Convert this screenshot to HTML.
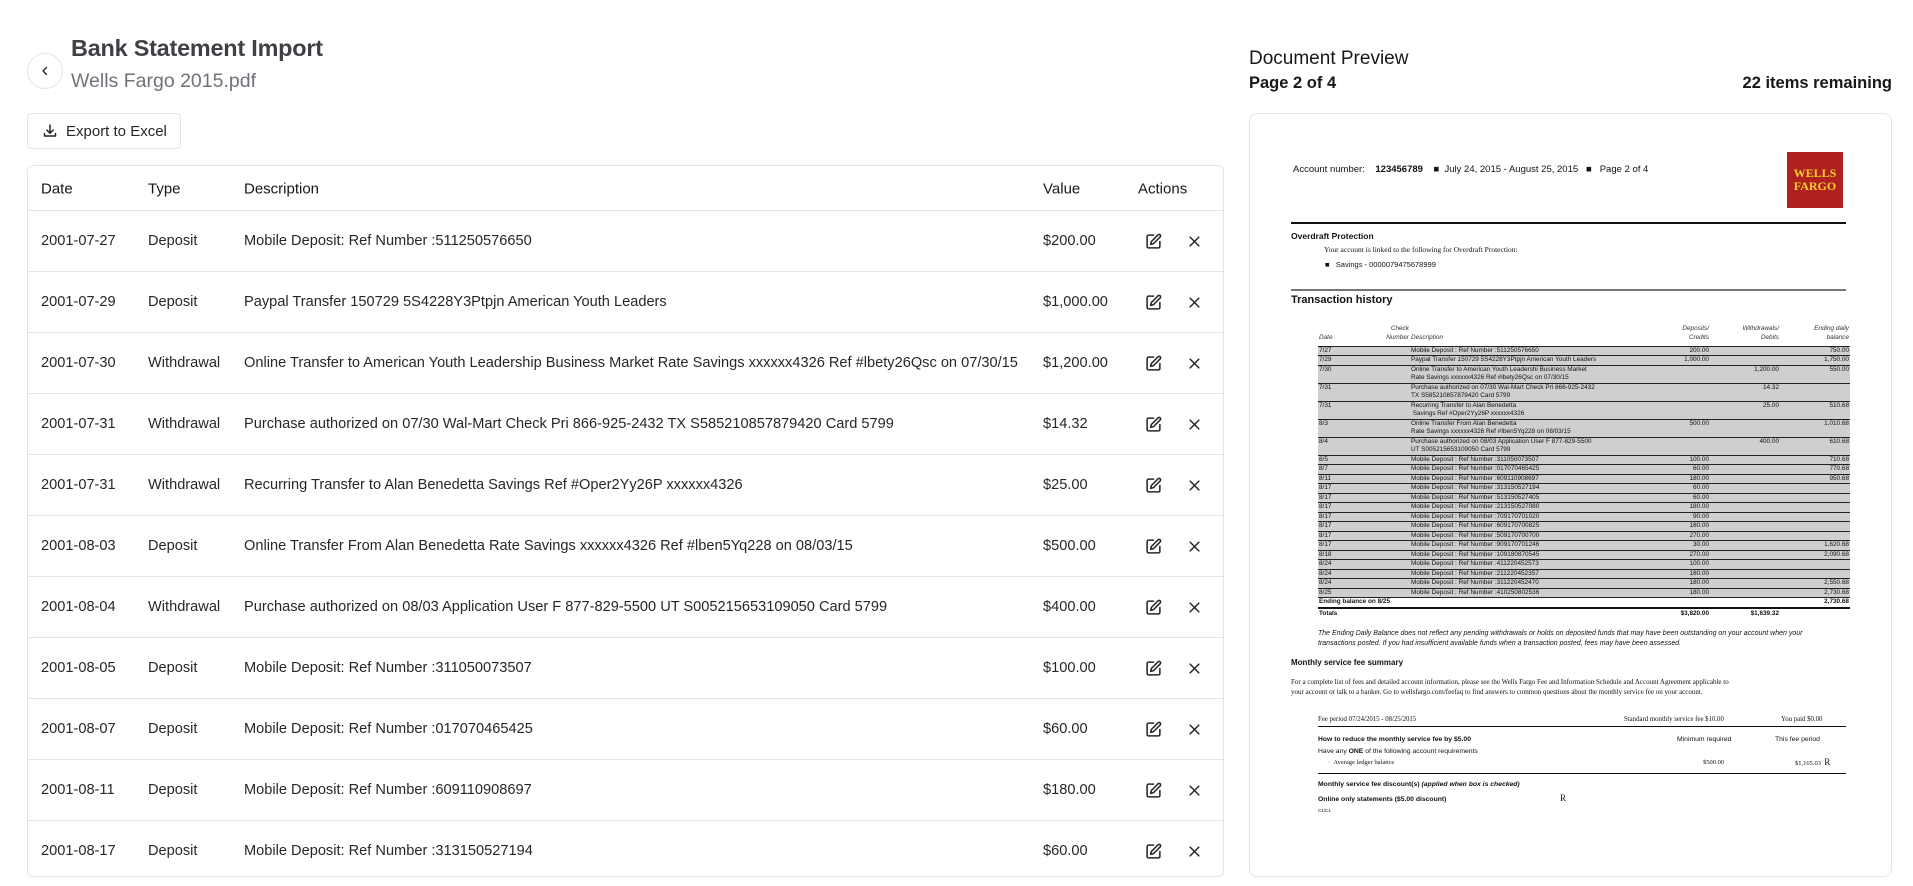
<!DOCTYPE html>
<html><head><meta charset="utf-8"><style>
*{box-sizing:border-box;margin:0;padding:0}
body{width:1913px;height:886px;overflow:hidden;background:#fff;font-family:"Liberation Sans",Arial,sans-serif;color:#18181b;position:relative}
.abs{position:absolute}
.back{left:27px;top:53px;width:36px;height:36px;border:1px solid #e4e4e7;border-radius:50%;display:flex;align-items:center;justify-content:center}
h1{position:absolute;left:71px;top:35px;font-size:23.4px;font-weight:bold;color:#3f3f46;letter-spacing:-0.2px}
.sub{left:71px;top:70px;font-size:19.5px;color:#71717a}
.btn{left:27px;top:113px;width:154px;height:36px;border:1px solid #e4e4e7;border-radius:4px;display:flex;align-items:center;padding-left:14px;font-size:15px;color:#27272a;gap:8px}
.tbl{left:27px;top:165px;width:1197px;height:712px;border:1px solid #e4e4e7;border-radius:6px;overflow:hidden}
.row{position:absolute;left:0;width:1197px;height:61px;border-top:1px solid #e4e4e7;font-size:14.6px;color:#27272a}
.row span{position:absolute;top:50%;transform:translateY(-50%);white-space:nowrap}
.hdr{height:45px;top:0;border-top:none;color:#18181b;font-size:15px}
.ed{position:absolute;left:1117px;top:22px}
.x{position:absolute;left:1159px;top:23px}
.dp{left:1249px;top:48px;font-size:19px;color:#18181b}
.pg{left:1249px;top:74px;font-size:16.5px;font-weight:bold;color:#18181b}
.rem{right:21px;top:74px;font-size:16.5px;font-weight:bold;color:#18181b}
.card{left:1249px;top:113px;width:643px;height:764px;border:1px solid #e4e4e7;border-radius:8px;overflow:hidden}
.pdf{font-family:"Liberation Sans",Arial,sans-serif;color:#111;white-space:nowrap}
.ser{font-family:"Liberation Serif",serif}
table.tx{position:absolute;left:1318px;top:325px;width:532px;border-collapse:collapse;font-size:6.4px;line-height:8.5px}
table.tx td{padding:0 1px;vertical-align:top}
table.tx tr.d td{background:#cfcfcf;border-top:1px solid #222}
.r{text-align:right}
</style></head><body>

<div class="abs back"><svg width="12" height="12" viewBox="0 0 12 12"><path d="M7.5 2.5 4 6l3.5 3.5" fill="none" stroke="#27272a" stroke-width="1.4" stroke-linecap="round" stroke-linejoin="round"/></svg></div>
<h1>Bank Statement Import</h1>
<div class="abs sub">Wells Fargo 2015.pdf</div>
<div class="abs btn"><svg width="16" height="16" viewBox="0 0 16 16" fill="none" stroke="#27272a" stroke-width="1.5" stroke-linecap="round" stroke-linejoin="round"><path d="M8 2v8M4.8 7 8 10.2 11.2 7M2.5 10.5v2.5h11v-2.5"/></svg>Export to Excel</div>

<div class="abs tbl">
<div class="row hdr"><span style="left:13px">Date</span><span style="left:120px">Type</span><span style="left:216px">Description</span><span style="left:1015px">Value</span><span style="left:1110px">Actions</span></div>
</div>

<div class="abs dp">Document Preview</div>
<div class="abs pg">Page 2 of 4</div>
<div class="abs rem">22 items remaining</div>
<div class="abs card"></div>

<div class="abs pdf" style="left:1293px;top:164px;font-size:9.5px">Account number: &nbsp;&nbsp;&nbsp;<b>123456789</b> &nbsp;&nbsp;&nbsp;■ &nbsp;July 24, 2015 - August 25, 2015 &nbsp;&nbsp;■ &nbsp;&nbsp;Page 2 of 4</div>
<div class="abs ser" style="left:1787px;top:152px;width:56px;height:56px;background:#b0201f;color:#f5d130;font-weight:bold;font-size:12px;line-height:13px;text-align:center;padding-top:15px">WELLS<br>FARGO</div>
<div class="abs" style="left:1291px;top:222px;width:555px;height:2px;background:#111"></div>
<div class="abs pdf" style="left:1291px;top:231px;font-size:8.5px;font-weight:bold">Overdraft Protection</div>
<div class="abs pdf ser" style="left:1324px;top:245px;font-size:7.5px">Your account is linked to the following for Overdraft Protection:</div>
<div class="abs pdf" style="left:1325px;top:260px;font-size:7.5px">■ &nbsp;&nbsp;Savings - 0000079475678999</div>
<div class="abs" style="left:1291px;top:289px;width:555px;height:2px;background:#777"></div>
<div class="abs pdf" style="left:1291px;top:294px;font-size:11px;font-weight:bold">Transaction history</div>

<table class="tx pdf">
<tr style="font-style:italic;color:#333"><td style="width:62px;vertical-align:bottom">Date</td><td class="r" style="width:30px;vertical-align:bottom">Check<br>Number</td><td style="vertical-align:bottom">Description</td><td class="r" style="width:80px">Deposits/<br>Credits</td><td class="r" style="width:70px">Withdrawals/<br>Debits</td><td class="r" style="width:70px">Ending daily<br>balance</td></tr>
<tr><td colspan=6 style="height:4px"></td></tr>
<tr class="d"><td>7/27</td><td></td><td>Mobile Deposit : Ref Number :511250576650</td><td class="r">200.00</td><td></td><td class="r">750.00</td></tr>
<tr class="d"><td>7/29</td><td></td><td>Paypal Transfer 150729 5S4228Y3Ptpjn American Youth Leaders</td><td class="r">1,000.00</td><td></td><td class="r">1,750.00</td></tr>
<tr class="d"><td>7/30</td><td></td><td>Online Transfer to American Youth Leadershi Business Market<br>Rate Savings xxxxxx4326 Ref #lbety26Qsc on 07/30/15</td><td></td><td class="r">1,200.00</td><td class="r">550.00</td></tr>
<tr class="d"><td>7/31</td><td></td><td>Purchase authorized on 07/30 Wal-Mart Check Pri 866-925-2432<br>TX S585210857879420 Card 5799</td><td></td><td class="r">14.32</td><td></td></tr>
<tr class="d"><td>7/31</td><td></td><td>Recurring Transfer to Alan Benedetta<br>&nbsp;Savings Ref #Oper2Yy26P xxxxxx4326</td><td></td><td class="r">25.00</td><td class="r">510.68</td></tr>
<tr class="d"><td>8/3</td><td></td><td>Online Transfer From Alan Benedetta<br>Rate Savings xxxxxx4326 Ref #Iben5Yq228 on 08/03/15</td><td class="r">500.00</td><td></td><td class="r">1,010.68</td></tr>
<tr class="d"><td>8/4</td><td></td><td>Purchase authorized on 08/03 Application User F 877-829-5500<br>UT S005215653109050 Card 5799</td><td></td><td class="r">400.00</td><td class="r">610.68</td></tr>
<tr class="d"><td>8/5</td><td></td><td>Mobile Deposit : Ref Number :311050073507</td><td class="r">100.00</td><td></td><td class="r">710.68</td></tr>
<tr class="d"><td>8/7</td><td></td><td>Mobile Deposit : Ref Number :017070465425</td><td class="r">60.00</td><td></td><td class="r">770.68</td></tr>
<tr class="d"><td>8/11</td><td></td><td>Mobile Deposit : Ref Number :609110908697</td><td class="r">180.00</td><td></td><td class="r">950.68</td></tr>
<tr class="d"><td>8/17</td><td></td><td>Mobile Deposit : Ref Number :313150527194</td><td class="r">60.00</td><td></td><td></td></tr>
<tr class="d"><td>8/17</td><td></td><td>Mobile Deposit : Ref Number :513150527405</td><td class="r">60.00</td><td></td><td></td></tr>
<tr class="d"><td>8/17</td><td></td><td>Mobile Deposit : Ref Number :213150527080</td><td class="r">180.00</td><td></td><td></td></tr>
<tr class="d"><td>8/17</td><td></td><td>Mobile Deposit : Ref Number :709170701020</td><td class="r">90.00</td><td></td><td></td></tr>
<tr class="d"><td>8/17</td><td></td><td>Mobile Deposit : Ref Number :609170700825</td><td class="r">180.00</td><td></td><td></td></tr>
<tr class="d"><td>8/17</td><td></td><td>Mobile Deposit : Ref Number :509170700700</td><td class="r">270.00</td><td></td><td></td></tr>
<tr class="d"><td>8/17</td><td></td><td>Mobile Deposit : Ref Number :909170701246</td><td class="r">30.00</td><td></td><td class="r">1,620.68</td></tr>
<tr class="d"><td>8/18</td><td></td><td>Mobile Deposit : Ref Number :109180870545</td><td class="r">270.00</td><td></td><td class="r">2,090.68</td></tr>
<tr class="d"><td>8/24</td><td></td><td>Mobile Deposit : Ref Number :411220452573</td><td class="r">100.00</td><td></td><td></td></tr>
<tr class="d"><td>8/24</td><td></td><td>Mobile Deposit : Ref Number :211220452357</td><td class="r">180.00</td><td></td><td></td></tr>
<tr class="d"><td>8/24</td><td></td><td>Mobile Deposit : Ref Number :311220452470</td><td class="r">180.00</td><td></td><td class="r">2,550.68</td></tr>
<tr class="d"><td>8/25</td><td></td><td>Mobile Deposit : Ref Number :410250802536</td><td class="r">180.00</td><td></td><td class="r">2,730.68</td></tr>
<tr style="font-weight:bold"><td colspan=2 style="border-top:1px solid #222">Ending balance on 8/25</td><td style="border-top:1px solid #222"></td><td style="border-top:1px solid #222"></td><td style="border-top:1px solid #222"></td><td class="r" style="border-top:1px solid #222">2,730.68</td></tr>
<tr style="font-weight:bold"><td colspan=3 style="border-top:2px solid #111;padding-top:1px">Totals</td><td class="r" style="border-top:2px solid #111;padding-top:1px">$3,820.00</td><td class="r" style="border-top:2px solid #111;padding-top:1px">$1,639.32</td><td style="border-top:2px solid #111"></td></tr>
</table>

<div class="abs pdf" style="left:1318px;top:629px;font-size:7px;line-height:10px;font-style:italic">The Ending Daily Balance does not reflect any pending withdrawals or holds on deposited funds that may have been outstanding on your account when your<br>transactions posted. If you had insufficient available funds when a transaction posted, fees may have been assessed.</div>
<div class="abs pdf" style="left:1291px;top:658px;font-size:8px;font-weight:bold">Monthly service fee summary</div>
<div class="abs pdf ser" style="left:1291px;top:677px;font-size:7px;line-height:10px">For a complete list of fees and detailed account information, please see the Wells Fargo Fee and Information Schedule and Account Agreement applicable to<br>your account or talk to a banker. Go to wellsfargo.com/feefaq to find answers to common questions about the monthly service fee on your account.</div>
<div class="abs pdf ser" style="left:1318px;top:716px;font-size:6.8px">Fee period 07/24/2015 - 08/25/2015</div>
<div class="abs pdf ser" style="left:1624px;top:716px;font-size:6.8px">Standard monthly service fee $10.00</div>
<div class="abs pdf ser" style="left:1781px;top:716px;font-size:6.8px">You paid $0.00</div>
<div class="abs" style="left:1318px;top:726px;width:528px;height:1px;background:#111"></div>
<div class="abs pdf" style="left:1318px;top:736px;font-size:6.8px;font-weight:bold">How to reduce the monthly service fee by $5.00</div>
<div class="abs pdf" style="left:1677px;top:736px;font-size:6.8px">Minimum required</div>
<div class="abs pdf" style="left:1775px;top:736px;font-size:6.8px">This fee period</div>
<div class="abs pdf" style="left:1318px;top:748px;font-size:6.8px">Have any <b>ONE</b> of the following account requirements</div>
<div class="abs pdf ser" style="left:1328px;top:759px;font-size:6.5px">· &nbsp;Average ledger balance</div>
<div class="abs pdf ser" style="left:1703px;top:759px;font-size:6.5px">$500.00</div>
<div class="abs pdf ser" style="left:1795px;top:757px;font-size:6.5px">$1,165.03 &nbsp;<span style="font-size:9px">R</span></div>
<div class="abs" style="left:1318px;top:773px;width:528px;height:1px;background:#111"></div>
<div class="abs pdf" style="left:1318px;top:781px;font-size:6.8px;font-weight:bold">Monthly service fee discount(s) <i>(applied when box is checked)</i></div>
<div class="abs pdf" style="left:1318px;top:796px;font-size:6.8px;font-weight:bold">Online only statements ($5.00 discount)</div>
<div class="abs pdf ser" style="left:1560px;top:793px;font-size:9px">R</div>
<div class="abs pdf" style="left:1318px;top:808px;font-size:4.5px">C1/C1</div>

<script>
var rows=[
["2001-07-27","Deposit","Mobile Deposit: Ref Number :511250576650","$200.00"],
["2001-07-29","Deposit","Paypal Transfer 150729 5S4228Y3Ptpjn American Youth Leaders","$1,000.00"],
["2001-07-30","Withdrawal","Online Transfer to American Youth Leadership Business Market Rate Savings xxxxxx4326 Ref #lbety26Qsc on 07/30/15","$1,200.00"],
["2001-07-31","Withdrawal","Purchase authorized on 07/30 Wal-Mart Check Pri 866-925-2432 TX S585210857879420 Card 5799","$14.32"],
["2001-07-31","Withdrawal","Recurring Transfer to Alan Benedetta Savings Ref #Oper2Yy26P xxxxxx4326","$25.00"],
["2001-08-03","Deposit","Online Transfer From Alan Benedetta Rate Savings xxxxxx4326 Ref #lben5Yq228 on 08/03/15","$500.00"],
["2001-08-04","Withdrawal","Purchase authorized on 08/03 Application User F 877-829-5500 UT S005215653109050 Card 5799","$400.00"],
["2001-08-05","Deposit","Mobile Deposit: Ref Number :311050073507","$100.00"],
["2001-08-07","Deposit","Mobile Deposit: Ref Number :017070465425","$60.00"],
["2001-08-11","Deposit","Mobile Deposit: Ref Number :609110908697","$180.00"],
["2001-08-17","Deposit","Mobile Deposit: Ref Number :313150527194","$60.00"]];
var t=document.querySelector('.tbl'),h='';
var ed='<svg class="ed" width="17" height="17" viewBox="0 0 24 24" fill="none" stroke="#27272a" stroke-width="2.2" stroke-linecap="round" stroke-linejoin="round"><path d="M12 3H5a2 2 0 0 0-2 2v14a2 2 0 0 0 2 2h14a2 2 0 0 0 2-2v-7"/><path d="M18.4 2.6a2.1 2.1 0 0 1 3 3L12 15l-4 1 1-4z"/></svg>';
var x='<svg class="x" width="15" height="15" viewBox="0 0 24 24" fill="none" stroke="#27272a" stroke-width="2.4" stroke-linecap="round"><path d="M5 5l14 14M19 5 5 19"/></svg>';
rows.forEach(function(r,i){h+='<div class="row" style="top:'+(44+i*61)+'px"><span style="left:13px">'+r[0]+'</span><span style="left:120px">'+r[1]+'</span><span style="left:216px">'+r[2]+'</span><span style="left:1015px">'+r[3]+'</span>'+ed+x+'</div>';});
t.innerHTML+=h;
</script>
</body></html>
